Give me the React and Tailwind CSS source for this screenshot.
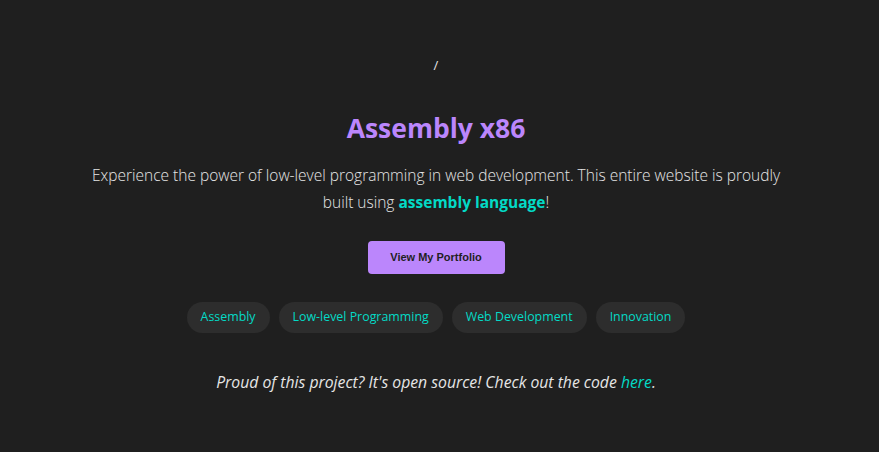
export default function App() {
  const tags = ['Assembly', 'Low-level Programming', 'Web Development', 'Innovation'];
  return (
    <div className="min-h-screen w-full bg-[#1f1f1f] text-[#e6e6e6] font-['Open_Sans',sans-serif] flex flex-col items-center pt-[57px] pr-[7px]">
      <div className="text-[13px] leading-4 text-[#e6e6e6]">/</div>

      <h1 className="mt-[39px] text-[26.5px] leading-8 font-bold text-[#bb86fc]">Assembly x86</h1>

      <p className="mt-[18px] max-w-[700px] text-center text-[15.5px] leading-[27px] font-light">
        Experience the power of low-level programming in web development. This entire website is proudly built using{' '}
        <span className="font-bold text-[#03dac6]">assembly language</span>!
      </p>

      <button className="mt-[25px] h-[33px] w-[137px] rounded bg-[#bb86fc] text-[11px] font-bold text-[#1f1f1f] font-['Liberation_Sans',sans-serif]">
        View My Portfolio
      </button>

      <div className="mt-[28px] flex gap-[9px]">
        {tags.map((t) => (
          <span key={t} className="h-[31px] px-[14px] flex items-center rounded-full bg-[#2d2d2d] text-[12.4px] text-[#03dac6]">
            {t}
          </span>
        ))}
      </div>

      <p className="mt-[37px] text-[15.75px] leading-6 italic">
        Proud of this project? It's open source! Check out the code{' '}
        <a href="#" className="text-[#03dac6]">here</a>.
      </p>
    </div>
  );
}
